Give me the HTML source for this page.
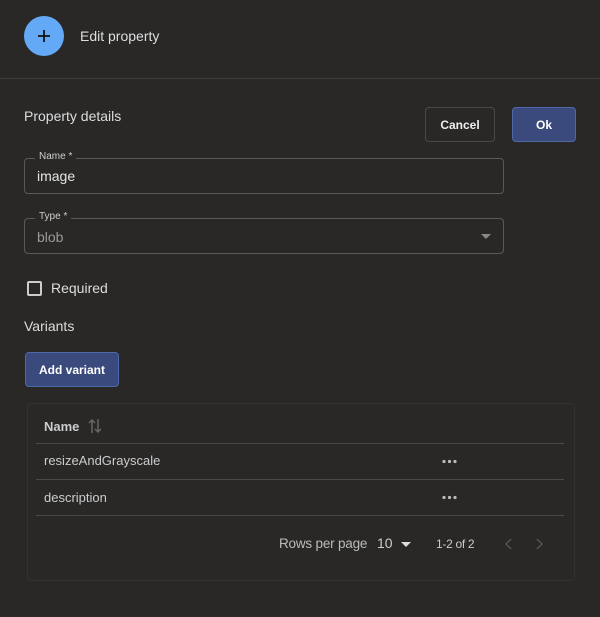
<!DOCTYPE html>
<html><head><style>
*{box-sizing:border-box;margin:0;padding:0}
body{width:600px;height:617px;background:#292827;font-family:"Liberation Sans",sans-serif;color:#ddd;position:relative;overflow:hidden}
.a{position:absolute}
.btn{position:absolute;border-radius:4px;font-weight:bold;font-size:12px;display:flex;align-items:center;justify-content:center}
.field{position:absolute;left:24px;width:480px;height:36px;border:1px solid #5a5958;border-radius:4px}
.lbl{position:absolute;top:-8px;left:10px;padding:0 4px;background:#292827;font-size:10px;color:#cfcfcf}
.line{position:absolute;left:36px;width:528px;height:1px;background:#4a4948}
</style></head><body>
<div class="a" style="left:24px;top:16px;width:40px;height:40px;border-radius:50%;background:#64a9f5"></div>
<svg class="a" style="left:36px;top:28px" width="16" height="16"><path d="M8 2v12M2 8h12" stroke="#111" stroke-width="1.8"/></svg>
<div class="a" style="left:80px;top:28px;font-size:14px;color:#ddd">Edit property</div>
<div class="a" style="left:0;top:78px;width:600px;height:1px;background:#3e3d3c"></div>
<div class="a" style="left:24px;top:108px;font-size:14px;color:#ddd">Property details</div>
<div class="btn" style="left:425px;top:107px;width:70px;height:35px;border:1px solid #4a4948;color:#eee">Cancel</div>
<div class="btn" style="left:512px;top:107px;width:64px;height:35px;background:#3a4a7c;border:1px solid #5168a8;color:#fff">Ok</div>
<div class="field" style="top:158px"><span class="lbl">Name *</span><div class="a" style="left:12px;top:9px;font-size:14px;color:#e5e5e5">image</div></div>
<div class="field" style="top:218px"><span class="lbl">Type *</span><div class="a" style="left:12px;top:10px;font-size:14px;color:#999">blob</div>
<svg class="a" style="left:456px;top:15px" width="10" height="5"><path d="M0 0h10L5 5z" fill="#888"/></svg></div>
<div class="a" style="left:27px;top:281px;width:15px;height:15px;border:2px solid #ccc;border-radius:2px"></div>
<div class="a" style="left:51px;top:280px;font-size:14px;color:#ddd">Required</div>
<div class="a" style="left:24px;top:318px;font-size:14px;color:#ddd">Variants</div>
<div class="btn" style="left:25px;top:352px;width:94px;height:35px;background:#3a4a7c;border:1px solid #5168a8;color:#fff">Add variant</div>
<div class="a" style="left:27px;top:403px;width:548px;height:178px;border:1px solid #333231;border-radius:4px"></div>
<div class="a" style="left:44px;top:419px;font-size:13px;font-weight:bold;color:#ccc">Name</div>
<svg class="a" style="left:87px;top:418px" width="16" height="16"><path d="M5 15V2M2 5l3-3 3 3M11 1v13M8 11l3 3 3-3" stroke="#666" stroke-width="1.5" fill="none"/></svg>
<div class="line" style="top:443px"></div>
<div class="a" style="left:44px;top:453px;font-size:13px;color:#ccc">resizeAndGrayscale</div>
<svg class="a" style="left:442px;top:459px" width="16" height="5"><circle cx="2" cy="2.5" r="1.6" fill="#bbb"/><circle cx="7.5" cy="2.5" r="1.6" fill="#bbb"/><circle cx="13" cy="2.5" r="1.6" fill="#bbb"/></svg>
<div class="line" style="top:479px"></div>
<div class="a" style="left:44px;top:490px;font-size:13px;color:#ccc">description</div>
<svg class="a" style="left:442px;top:495px" width="16" height="5"><circle cx="2" cy="2.5" r="1.6" fill="#bbb"/><circle cx="7.5" cy="2.5" r="1.6" fill="#bbb"/><circle cx="13" cy="2.5" r="1.6" fill="#bbb"/></svg>
<div class="line" style="top:515px"></div>
<div class="a" style="left:279px;top:536px;font-size:13.5px;color:#bbb;letter-spacing:-0.2px">Rows per page</div>
<div class="a" style="left:377px;top:535px;font-size:14px;color:#ccc">10</div>
<svg class="a" style="left:401px;top:542px" width="10" height="5"><path d="M0 0h10L5 5z" fill="#ddd"/></svg>
<div class="a" style="left:436px;top:537px;font-size:12px;color:#ccc;letter-spacing:-0.3px">1-2 of 2</div>
<svg class="a" style="left:504px;top:538px" width="40" height="12"><path d="M7 1L2 6l5 5M33 1l5 5-5 5" stroke="#555" stroke-width="1.5" fill="none"/></svg>
</body></html>
